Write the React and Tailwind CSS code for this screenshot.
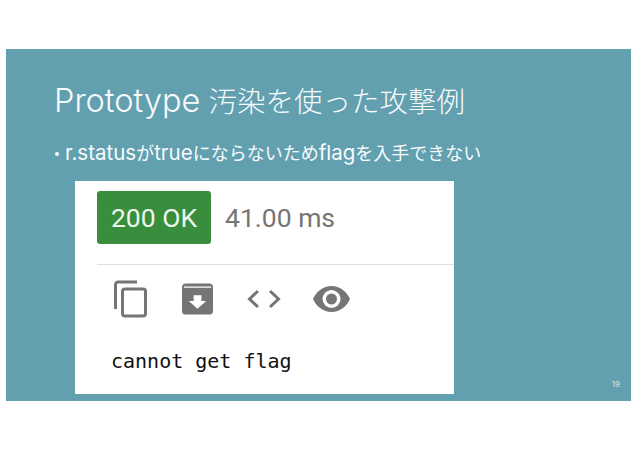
import React from "react";

export default function App() {
  return (
    <div className="w-[638px] h-[451px] bg-white pt-[49px] pl-[6px] overflow-hidden">
      <div className="relative w-[625px] h-[352px] bg-[#62a0b0] flex flex-col font-['Inter','Noto_Sans_CJK_JP',sans-serif] text-white">
        <div className="pl-[48px] pt-[32px] text-[28.500px] leading-[40px] font-light text-[#f8fbfc] whitespace-nowrap">
          <span className="text-[32.500px]">Prototype</span> 汚染を使った攻撃例
        </div>
        <div className="pl-[49px] mt-[19px] text-[18px] leading-[24px] font-normal text-[#f8fbfc] whitespace-nowrap flex items-center gap-[6px]">
          <span className="w-[4px] h-[4px] rounded-full bg-[#f8fbfc]"></span>
          <span>
            <span className="text-[20.500px]">r.status</span>が<span className="text-[20.500px]">true</span>にならないため<span className="text-[20.500px]">flag</span>を入手できない
          </span>
        </div>
        <div className="ml-[69px] mt-[15px] w-[379px] h-[213px] bg-white flex flex-col pl-[22px] font-['Roboto',sans-serif]">
          <div className="flex items-center mt-[10px] h-[53px]">
            <div className="w-[114px] h-[53px] rounded-[3px] bg-[#388e3c] text-[#eef6ee] text-[26.500px] flex items-center justify-center">200 OK</div>
            <div className="ml-[14px] text-[26.500px] text-[#757575]">41.00 ms</div>
          </div>
          <div className="mt-[20px] h-[1px] w-[357px] bg-[#e0e0e0]"></div>
          <div className="flex items-center mt-[15px] ml-[16px] h-[38px]">
            <svg width="36" height="38" viewBox="0 0 36 38" fill="none" stroke="#757575" strokeWidth="3">
              <path d="M24 2H5a2.500 2.500 0 0 0-2.500 2.500V29" />
              <rect x="9.500" y="9" width="23" height="27" rx="2.500" />
            </svg>
            <svg className="ml-[33px]" width="31" height="32" viewBox="0 0 32 32">
              <path fill="#757575" d="M4 0h24a4 4 0 0 1 4 4v24a4 4 0 0 1-4 4H4a4 4 0 0 1-4-4V4a4 4 0 0 1 4-4z" />
              <path fill="#fff" d="M2 3h28v1.500H2zM12 12h8v6h5l-9 8-9-8h5z" />
            </svg>
            <svg className="ml-[34px]" width="34" height="20" viewBox="0 0 34 20" fill="none" stroke="#757575" strokeWidth="3">
              <path d="M11 2 2.500 10 11 18M23 2l8.500 8L23 18" />
            </svg>
            <svg className="ml-[32px]" width="37" height="26" viewBox="0 0 37 26">
              <path fill="#757575" d="M18.500 0C10 0 3.500 5.500 0 13c3.500 7.500 10 13 18.500 13S33.500 20.500 37 13C33.500 5.500 27 0 18.500 0z" />
              <circle cx="18.500" cy="13" r="9" fill="#fff" />
              <circle cx="18.500" cy="13" r="5.500" fill="#757575" />
            </svg>
          </div>
          <div className="mt-[29px] ml-[14px] text-[20px] leading-[28px] text-[#111] font-['DejaVu_Sans_Mono',monospace] whitespace-nowrap">cannot get flag</div>
        </div>
        <div className="absolute right-[11px] top-[330px] text-[8px] leading-[10px] text-[#d5e6ea]">19</div>
      </div>
    </div>
  );
}
